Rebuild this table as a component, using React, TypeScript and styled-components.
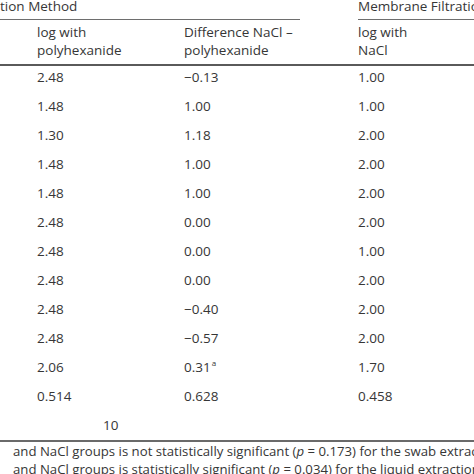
import styled, { createGlobalStyle } from 'styled-components';

const GlobalStyle = createGlobalStyle`
  html, body {
    margin: 0;
    padding: 0;
    background: #ffffff;
    overflow: hidden;
  }
  body {
    font-family: "Open Sans", "Noto Sans", sans-serif;
    color: #363636;
  }
`;

interface Row {
  polyhexanide: string;
  difference: string;
  nacl: string;
  note?: string;
}

const rows: Row[] = [
  { polyhexanide: '2.48', difference: '\u22120.13', nacl: '1.00' },
  { polyhexanide: '1.48', difference: '1.00', nacl: '1.00' },
  { polyhexanide: '1.30', difference: '1.18', nacl: '2.00' },
  { polyhexanide: '1.48', difference: '1.00', nacl: '2.00' },
  { polyhexanide: '1.48', difference: '1.00', nacl: '2.00' },
  { polyhexanide: '2.48', difference: '0.00', nacl: '2.00' },
  { polyhexanide: '2.48', difference: '0.00', nacl: '1.00' },
  { polyhexanide: '2.48', difference: '0.00', nacl: '2.00' },
  { polyhexanide: '2.48', difference: '\u22120.40', nacl: '2.00' },
  { polyhexanide: '2.48', difference: '\u22120.57', nacl: '2.00' },
  { polyhexanide: '2.06', difference: '0.31', nacl: '1.70', note: 'a' },
  { polyhexanide: '0.514', difference: '0.628', nacl: '0.458' },
];

export default function App() {
  return (
    <>
      <GlobalStyle />
      <Page>
        <GroupRow>
          <GroupTitle>tion Method</GroupTitle>
          <GroupTitle>Membrane Filtration</GroupTitle>
        </GroupRow>

        <HeaderRow>
          <span />
          <HeadCell>log with<br />polyhexanide</HeadCell>
          <HeadCell>Difference NaCl &ndash;<br />polyhexanide</HeadCell>
          <HeadCell>log with<br />NaCl</HeadCell>
        </HeaderRow>

        {rows.map((r, i) => (
          <DataRow key={i}>
            <span />
            <Cell>{r.polyhexanide}</Cell>
            <Cell>
              {r.difference}
              {r.note && <Sup>{r.note}</Sup>}
            </Cell>
            <Cell>{r.nacl}</Cell>
          </DataRow>
        ))}

        <CountRow>
          <CountCell>10</CountCell>
        </CountRow>

        <Footnotes>
          <Note>and NaCl groups is not statistically significant (<i>p</i> = 0.173) for the swab extraction method</Note>
          <Note>and NaCl groups is statistically significant (<i>p</i> = 0.034) for the liquid extraction method</Note>
        </Footnotes>
      </Page>
    </>
  );
}

const Page = styled.div`
  width: 474px;
  height: 474px;
  overflow: hidden;
  font-size: 13.5px;
`;

const GroupRow = styled.div`
  display: grid;
  grid-template-columns: 300px 1fr;
  column-gap: 58px;
`;

const GroupTitle = styled.div`
  height: 19px;
  line-height: 12px;
  white-space: nowrap;
  overflow: hidden;
  border-bottom: 1px solid #6e6e6e;
`;

const Columns = styled.div`
  display: grid;
  grid-template-columns: 37px 147px 174px 1fr;
`;

const HeaderRow = styled(Columns)`
  height: 46px;
  padding-top: 3px;
  box-sizing: border-box;
  border-bottom: 2px solid #5a5a5a;
  line-height: 18px;
`;

const HeadCell = styled.div`
  white-space: nowrap;
`;

const DataRow = styled(Columns)`
  height: 29px;
  padding-top: 2px;
  box-sizing: border-box;
  line-height: 18px;
`;

const Cell = styled.div`
  white-space: nowrap;
`;

const Sup = styled.sup`
  font-size: 8px;
  line-height: 0;
  vertical-align: 6px;
  margin-left: 1px;
`;

const CountRow = styled.div`
  height: 28px;
  padding: 2px 0 0 103px;
  box-sizing: border-box;
  line-height: 18px;
  border-bottom: 2px solid #6a6a6a;
`;

const CountCell = styled.div`
  white-space: nowrap;
`;

const Footnotes = styled.div`
  padding-left: 13px;
  font-size: 13.2px;
`;

const Note = styled.div`
  white-space: nowrap;
  line-height: 18px;
`;
